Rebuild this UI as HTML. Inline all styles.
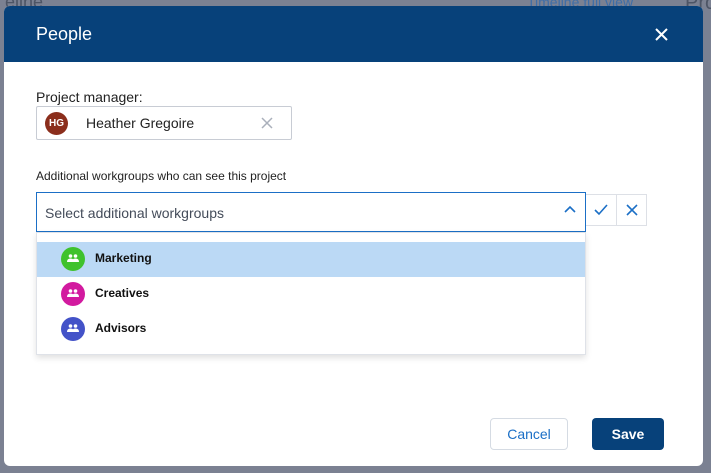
<!DOCTYPE html>
<html><head><style>
body{margin:0;width:711px;height:473px;background:#7b8192;position:relative;overflow:hidden;font-family:"Liberation Sans",sans-serif}
.bgt{position:absolute;color:#4d5566;font-size:18px}
.modal{position:absolute;left:4px;top:6px;width:699px;height:460px;background:#fff;border-radius:6px;overflow:hidden}
.hdr{height:56px;background:#07417a;color:#fff;position:relative}
.hdr .t{position:absolute;left:32px;top:18px;font-size:18px}
.abs{position:absolute}
</style></head><body>
<div class="bgt" style="left:5px;top:-8px">eline</div>
<div class="bgt" style="left:527px;top:-6px;font-size:14px;color:#3f6ea8">Timeline full view</div>
<div class="bgt" style="left:685px;top:-8px;font-size:20px">Pro</div>
<div class="modal">
<div class="hdr"><div class="t">People</div>
<svg class="abs" style="left:651px;top:22px" width="13" height="13" viewBox="0 0 13 13"><path d="M1 1L12 12M12 1L1 12" stroke="#fff" stroke-width="2"/></svg></div>
<div class="abs" style="left:32px;top:83px;font-size:14px;color:#222">Project manager:</div>
<div class="abs" style="left:32px;top:100px;width:254px;height:32px;border:1px solid #c8ccd4;border-radius:2px">
<div class="abs" style="left:8px;top:5px;width:23px;height:23px;border-radius:50%;background:#8b2e1c;color:#fff;font-size:10px;font-weight:bold;text-align:center;line-height:23px">HG</div>
<div class="abs" style="left:49px;top:8px;font-size:14px;color:#222">Heather Gregoire</div>
<svg class="abs" style="left:224px;top:10px" width="12" height="12"><path d="M1 1L11 11M11 1L1 11" stroke="#aab0bb" stroke-width="1.5"/></svg></div>
<div class="abs" style="left:32px;top:163px;font-size:12px;color:#222">Additional workgroups who can see this project</div>
<div class="abs" style="left:32px;top:186px;width:548px;height:38px;border:1px solid #1b6fc6">
<div class="abs" style="left:8px;top:12px;font-size:14px;color:#444c5a">Select additional workgroups</div>
<svg class="abs" style="left:527px;top:12px" width="12" height="8"><path d="M1 7L6 2L11 7" stroke="#1b6fc6" stroke-width="1.6" fill="none"/></svg></div>
<div class="abs" style="left:582px;top:188px;width:60px;height:30px;border:1px solid #dde0e6;border-left:none">
<div class="abs" style="left:30px;top:0;width:1px;height:30px;background:#dde0e6"></div>
<svg class="abs" style="left:8px;top:9px" width="14" height="12"><path d="M1 6L5 10L13 1" stroke="#1b6fc6" stroke-width="1.6" fill="none"/></svg>
<svg class="abs" style="left:40px;top:9px" width="12" height="12"><path d="M1 1L11 11M11 1L1 11" stroke="#1b6fc6" stroke-width="1.6"/></svg></div>
<div class="abs" style="left:32px;top:226px;width:548px;height:121px;border:1px solid #dfe2e8;box-shadow:0 3px 6px rgba(0,0,0,.12)">
<div class="abs" style="left:0;top:9px;width:548px;height:35px;background:#bbd9f5"></div>
<div class="row"></div>
</div>
<div class="abs" style="left:57px;top:241px;width:24px;height:24px;border-radius:50%;background:#3fc22d"></div>
<div class="abs" style="left:57px;top:276px;width:24px;height:24px;border-radius:50%;background:#d21a9f"></div>
<div class="abs" style="left:57px;top:311px;width:24px;height:24px;border-radius:50%;background:#4352c8"></div>
<svg class="abs" style="left:63px;top:248px" width="12" height="8"><circle cx="3.5" cy="2" r="1.8" fill="#fff"/><circle cx="8.5" cy="2" r="1.8" fill="#fff"/><path d="M0 8Q0 4.5 3.5 4.5Q7 4.5 7 8ZM5 8Q5 4.5 8.5 4.5Q12 4.5 12 8Z" fill="#fff"/></svg>
<svg class="abs" style="left:63px;top:283px" width="12" height="8"><circle cx="3.5" cy="2" r="1.8" fill="#fff"/><circle cx="8.5" cy="2" r="1.8" fill="#fff"/><path d="M0 8Q0 4.5 3.5 4.5Q7 4.5 7 8ZM5 8Q5 4.5 8.5 4.5Q12 4.5 12 8Z" fill="#fff"/></svg>
<svg class="abs" style="left:63px;top:318px" width="12" height="8"><circle cx="3.5" cy="2" r="1.8" fill="#fff"/><circle cx="8.5" cy="2" r="1.8" fill="#fff"/><path d="M0 8Q0 4.5 3.5 4.5Q7 4.5 7 8ZM5 8Q5 4.5 8.5 4.5Q12 4.5 12 8Z" fill="#fff"/></svg>
<div class="abs" style="left:91px;top:245px;font-size:12px;font-weight:bold;color:#111">Marketing</div>
<div class="abs" style="left:91px;top:280px;font-size:12px;font-weight:bold;color:#111">Creatives</div>
<div class="abs" style="left:91px;top:315px;font-size:12px;font-weight:bold;color:#111">Advisors</div>
<div class="abs" style="left:486px;top:412px;width:76px;height:30px;border:1px solid #d5dbe3;border-radius:4px;color:#1b6fc6;font-size:14px;text-align:center;line-height:30px">Cancel</div>
<div class="abs" style="left:588px;top:412px;width:72px;height:32px;background:#07417a;border-radius:4px;color:#fff;font-size:14px;font-weight:bold;text-align:center;line-height:32px">Save</div>
</div>
</body></html>
